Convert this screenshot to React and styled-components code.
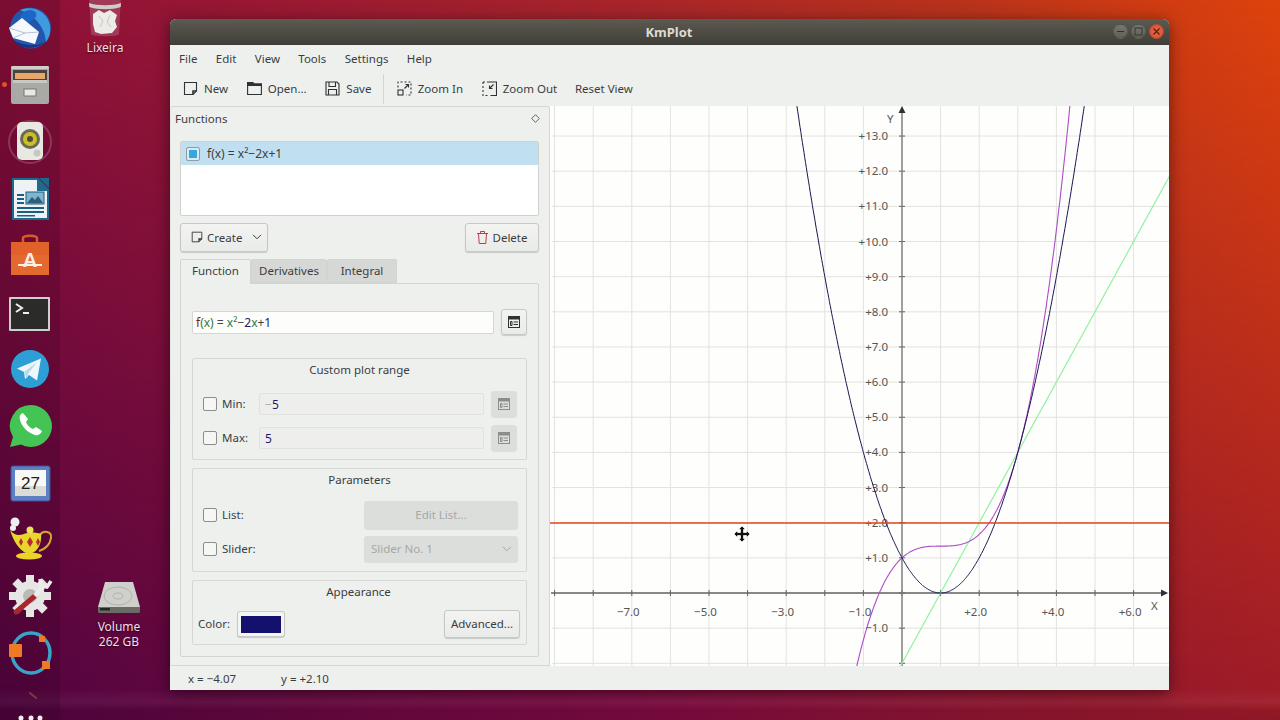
import React from 'react';
import styled, { createGlobalStyle } from 'styled-components';

const GlobalStyle = createGlobalStyle`
  html, body { margin: 0; padding: 0; background: #5a0440; }
  * { box-sizing: border-box; }
  body { font-family: "Noto Sans", "Open Sans", sans-serif; }
`;

const Desktop = styled.div`
  position: relative;
  width: 1280px;
  height: 720px;
  overflow: hidden;
  display: flex;
  background: linear-gradient(to right, #8f1039 0%, #a8262a 50%, #b8331c 75%, #de430c 100%);

  &::before {
    content: "";
    position: absolute;
    inset: 0;
    background: linear-gradient(to right, #50043f 0%, #7c0a42 50%, #8d1432 75%, #9c1a28 100%);
    mask-image: linear-gradient(to bottom, transparent 0%, black 100%);
  }

  &::after {
    content: "";
    position: absolute;
    inset: 0;
    background: linear-gradient(to bottom, transparent 688px, rgba(255, 255, 255, 0.05) 702px, rgba(0, 0, 0, 0.08) 710px);
  }
`;

const Dock = styled.div`
  position: relative;
  z-index: 1;
  width: 60px;
  height: 720px;
  flex: none;
  display: flex;
  flex-direction: column;
  background: rgba(40, 0, 30, 0.18);
`;

const DockSlot = styled.div`
  height: 56.75px;
  flex: none;
  display: flex;
  align-items: center;
  justify-content: center;
  svg { display: block; }
`;

const RunDot = styled.span`
  position: absolute;
  left: 2px;
  top: 82px;
  width: 5px;
  height: 5px;
  border-radius: 50%;
  background: #e0502a;
`;

const DesktopIcon = styled.div`
  position: absolute;
  z-index: 1;
  left: ${p => p.$left}px;
  top: ${p => p.$top}px;
  width: 80px;
  display: flex;
  flex-direction: column;
  align-items: center;
  color: #ecdfe2;
  font-size: 12px;
  line-height: 15px;
  text-align: center;
  text-shadow: 0 1px 2px rgba(0, 0, 0, 0.6);
`;

const IconLabel = styled.span`
  margin-top: ${p => p.$gap}px;
`;

const Window = styled.div`
  position: absolute;
  z-index: 2;
  left: 170px;
  top: 19px;
  width: 999px;
  height: 671px;
  display: flex;
  flex-direction: column;
  background: #eef0ee;
  border-radius: 6px 6px 0 0;
  box-shadow: 0 3px 16px rgba(0, 0, 0, 0.5);
  color: #3a3d3e;
  font-size: 11.5px;
`;

const TitleBar = styled.div`
  position: relative;
  height: 26px;
  flex: none;
  display: flex;
  align-items: center;
  justify-content: center;
  padding-right: 1px;
  border-radius: 6px 6px 0 0;
  background: linear-gradient(to bottom, #5c5a51, #3f3e38);
  color: #dedbd2;
  font-size: 13px;
  font-weight: 700;
`;

const WindowButtons = styled.div`
  position: absolute;
  right: 5px;
  top: 5px;
  display: flex;
  gap: 3px;
`;

const WindowButton = styled.div`
  width: 15px;
  height: 15px;
  border-radius: 50%;
  display: flex;
  align-items: center;
  justify-content: center;
  background: ${p => (p.$close ? 'radial-gradient(circle, #e8674a, #d9502f)' : 'linear-gradient(#78776f, #605f58)')};
  border: 1px solid rgba(0, 0, 0, 0.15);
`;

const MenuBar = styled.div`
  height: 28px;
  flex: none;
  display: flex;
  align-items: center;
  gap: 18.4px;
  padding: 0 0 2px 9px;
  font-size: 11.5px;
`;

const ToolBar = styled.div`
  height: 33px;
  flex: none;
  display: flex;
  align-items: center;
  gap: 18.7px;
  padding-left: 13px;
  padding-bottom: 2px;
`;

const ToolItem = styled.div`
  display: flex;
  align-items: center;
  gap: 6px;
  margin-left: ${p => p.$shift || 0}px;
  svg { display: block; flex: none; }
`;

const ToolSeparator = styled.div`
  width: 1px;
  height: 30px;
  margin: 0 -6px 0 -7px;
  background: #d2d4d2;
`;

const Body = styled.div`
  flex: 1;
  min-height: 0;
  display: flex;
`;

const DockWidget = styled.div`
  width: 380px;
  flex: none;
  display: flex;
  flex-direction: column;
  padding: 0 10px 0 9px;
  border: 1px solid #d6d8d6;
  border-left-color: #e4e6e4;
  border-radius: 3px 3px 0 0;
`;

const DockHeader = styled.div`
  height: 34px;
  flex: none;
  display: flex;
  align-items: center;
  justify-content: space-between;
  margin: 0 -5px 0 -5px;
  padding: 0 0 11px 0;
  svg { margin-right: 0; transform: translateX(-4px); }
`;

const FunctionList = styled.div`
  height: 75px;
  flex: none;
  background: #fff;
  border: 1px solid #cfd1cf;
  border-radius: 2px;
`;

const FunctionRow = styled.div`
  height: 23px;
  display: flex;
  align-items: center;
  gap: 7px;
  padding: 0 0 0 5px;
  background: #c0e0f1;
  border-radius: 1px;
  font-size: 12px;
`;

const ListCheck = styled.span`
  width: 14px;
  height: 14px;
  flex: none;
  padding: 2px;
  border: 1px solid #8d9ca5;
  border-radius: 2px;
  background: #d8ecf6;
  &::before {
    content: "";
    display: block;
    width: 8px;
    height: 8px;
    background: #36a8dc;
  }
`;

const ActionRow = styled.div`
  display: flex;
  justify-content: space-between;
  margin-top: 7px;
`;

const Button = styled.div`
  height: ${p => p.$h || 28}px;
  width: ${p => (p.$w ? `${p.$w}px` : 'auto')};
  flex: none;
  display: flex;
  align-items: center;
  justify-content: center;
  gap: 5px;
  padding-bottom: 1px;
  border: 1px solid ${p => (p.$off ? '#dcdedc' : '#c6c8c6')};
  border-radius: 3px;
  background: ${p => (p.$off ? '#dcdedb' : 'linear-gradient(#f3f4f2, #e9ebe9)')};
  box-shadow: 0 1px 1px rgba(0, 0, 0, ${p => (p.$off ? 0.08 : 0.16)});
  color: ${p => (p.$off ? '#a5a8a6' : 'inherit')};
  svg { display: block; flex: none; }
`;

const CreateButton = styled(Button)`
  justify-content: flex-start;
  padding: 0 5px 1px 10px;
  gap: 4px;
`;

const Caret = styled.span`
  margin-left: auto;
  display: flex;
`;

const RangeButton = styled(Button)`
  margin-left: 7px;
  padding-bottom: 0;
`;

const Tabs = styled.div`
  display: flex;
  margin-top: 7px;
  position: relative;
  z-index: 1;
`;

const Tab = styled.div`
  height: ${p => (p.$active ? 25 : 24)}px;
  width: ${p => p.$w}px;
  display: flex;
  align-items: center;
  justify-content: center;
  padding-bottom: ${p => (p.$active ? 3 : 2)}px;
  background: ${p => (p.$active ? '#eef0ee' : '#d6d8d6')};
  border: 1px solid #d2d4d2;
  border-bottom: ${p => (p.$active ? 'none' : '1px solid #d2d4d2')};
  border-radius: 2px 2px 0 0;
`;

const TabPane = styled.div`
  height: 374px;
  flex: none;
  margin-top: -1px;
  padding: 25px 11px 0;
  border: 1px solid #d2d4d2;
  border-radius: 0 2px 2px 2px;
`;

const InputRow = styled.div`
  display: flex;
  align-items: center;
  justify-content: space-between;
  height: 26px;
  margin-bottom: 23px;
`;

const Field = styled.div`
  width: ${p => p.$w}px;
  height: ${p => p.$h || 22}px;
  display: flex;
  align-items: center;
  padding: 0 0 0 ${p => p.$pad || 3}px;
  background: ${p => (p.$off ? '#eeefed' : '#fdfdfc')};
  border: 1px solid ${p => (p.$off ? '#e0e2e0' : '#d4d6d4')};
  border-radius: 2px;
  font-size: 12px;
`;

const Tok = styled.span`
  color: ${p => p.$c};
`;

const Group = styled.div`
  height: ${p => p.$h}px;
  margin-bottom: 8px;
  padding: 0 ${p => p.$right || 9}px 0 ${p => p.$left || 10}px;
  border: 1px solid #d6d8d6;
  border-radius: 2px;
`;

const GroupTitle = styled.div`
  height: 22px;
  padding-bottom: 2px;
  margin: 0 -9px ${p => p.$gap}px -10px;
  display: flex;
  align-items: center;
  justify-content: center;
`;

const FormRow = styled.div`
  height: 34px;
  display: flex;
  align-items: center;
  justify-content: ${p => (p.$between ? 'space-between' : 'flex-start')};
`;

const CheckLabel = styled.label`
  width: ${p => p.$w}px;
  flex: none;
  display: flex;
  align-items: center;
  gap: 5px;
  line-height: 14px;
`;

const CheckBox = styled.span`
  width: 14px;
  height: 14px;
  flex: none;
  background: #f6f7f5;
  border: 1px solid #8c8e8c;
  border-radius: 2px;
`;

const ColorGroup = styled.div`
  display: flex;
  align-items: center;
  gap: 7px;
`;

const ColorLabel = styled.span`
  padding-bottom: 2px;
`;

const ColorButton = styled(Button)`
  padding: 3px;
  background: #f4f5f3;
  &::before {
    content: "";
    display: block;
    width: 40px;
    height: 17px;
    background: ${p => p.$color};
  }
`;

const ComboButton = styled(Button)`
  justify-content: space-between;
  padding: 0 5px 1px 6px;
`;

const Plot = styled.div`
  flex: 1;
  min-width: 0;
  background: #fefefc;
  svg { display: block; }
`;

const StatusBar = styled.div`
  height: 24px;
  flex: none;
  display: flex;
  align-items: center;
  gap: 45px;
  padding-left: 18px;
`;

const AxisText = styled.text`
  font-family: "Noto Sans", sans-serif;
  font-size: 11.5px;
  fill: #555755;
`;

/* icons */
const stroke = { fill: 'none', stroke: '#2f3234', strokeWidth: 1.1 };

const NewIcon = ({ size = 15 }) => (
  <svg width={size} height={size} viewBox="0 0 15 15" {...stroke}>
    <path d="M1.5 1.5h12v8.5l-3.5 3.5h-8.500z" />
    <path d="M13.500 10h-3.500v3.500" strokeWidth="1.600" />
  </svg>
);

const OpenIcon = () => (
  <svg width="15" height="15" viewBox="0 0 15 15" {...stroke}>
    <path d="M.6 1.500h5l1.500 1.500h7.300v10.500h-13.800z" />
    <path d="M.6 1.500h5l1.500 1.500h7.300v1.500h-13.800z" fill="#2f3234" />
  </svg>
);

const SaveIcon = () => (
  <svg width="15" height="15" viewBox="0 0 15 15" {...stroke}>
    <path d="M1 1h11l2 2v11h-13z" />
    <path d="M4 1v4.500h6.500v-4.500M3.500 14v-5.500h8v5.500" />
  </svg>
);

const ZoomInIcon = () => (
  <svg width="15" height="15" viewBox="0 0 15 15" {...stroke}>
    <rect x="1" y="9" width="5" height="5" />
    <path d="M1 6.500v-5.500h13v13h-5" strokeDasharray="2 2" />
    <path d="M7.500 7.500l4-4M8.500 3.500h3v3" />
  </svg>
);

const ZoomOutIcon = () => (
  <svg width="15" height="15" viewBox="0 0 15 15" {...stroke}>
    <path d="M5 1h9.500v13.500h-6" />
    <path d="M1 1v13.500h6M1 1h4" strokeDasharray="2 2" />
    <path d="M11.500 3.500l-4 4M7.500 4.500v3h3" />
  </svg>
);

const CalcIcon = ({ off }) => (
  <svg width="14" height="14" viewBox="0 0 14 14" fill="none" stroke={off ? '#8b8e8d' : '#2f3234'} strokeWidth="1">
    <rect x="1.500" y="1.500" width="11" height="11" />
    <rect x="1.500" y="1.500" width="11" height="2.500" fill={off ? '#8b8e8d' : '#2f3234'} />
    <path d="M3.500 6.500h1.500v4h-1.500zM6.500 7h4.500M6.500 9.500h4.500" />
  </svg>
);

const TrashSmall = () => (
  <svg width="11" height="13" viewBox="0 0 11 13" fill="none" stroke="#b04050" strokeWidth="1">
    <path d="M0 2.500h11M3.500 2.500v-2h4v2M1.500 2.500l.7 10h6.600l.7-10" />
  </svg>
);

const Chevron = ({ color = '#3a3d3e' }) => (
  <svg width="10" height="6" viewBox="0 0 10 6" fill="none" stroke={color} strokeWidth="1">
    <path d="M1 .8l4 4 4-4" />
  </svg>
);

const FloatIcon = () => (
  <svg width="9" height="9" viewBox="0 0 9 9" fill="none" stroke="#55585a" strokeWidth=".9">
    <path d="M4.500.7l3.800 3.800-3.800 3.800-3.800-3.800z" />
  </svg>
);

const Thunderbird = () => (
  <svg width="48" height="48" viewBox="0 0 48 48">
    <circle cx="24.500" cy="24" r="20.500" fill="#2256ad" />
    <path d="M14 6c12-5 27 1 30 15 1 8-1 13-4 17-1-13-9-26-26-32z" fill="#3f9be0" />
    <path d="M14 16c0-6 4-10 11-10 5 1 6 4 5 7l-8 6z" fill="#1d66c4" />
    <path d="M7 36c10 6 22 7 32 2-8 7-24 9-32-2z" fill="#16337f" />
    <path d="M3 24l13-10 17 14-4 12-22-6z" fill="#f7f8fb" />
    <path d="M3 24l16 5 14-1M7 34l12-5" fill="none" stroke="#b9c2d4" strokeWidth="1" />
  </svg>
);

const Files = () => (
  <svg width="48" height="48" viewBox="0 0 48 48">
    <rect x="5" y="5" width="38" height="38" rx="2" fill="#a9aaa6" />
    <rect x="5" y="5" width="38" height="3" rx="1.500" fill="#cfcfcb" />
    <rect x="7" y="9" width="34" height="13" fill="#4a443c" />
    <rect x="9" y="12" width="30" height="6" fill="#e6a66c" />
    <rect x="7" y="19" width="34" height="3" fill="#c8c8c4" />
    <rect x="18" y="28" width="12" height="7" fill="#e8e8e5" stroke="#777" strokeWidth="1" />
  </svg>
);

const Speaker = () => (
  <svg width="48" height="48" viewBox="0 0 48 48">
    <circle cx="24" cy="24" r="21" fill="none" stroke="#fff" strokeOpacity=".18" strokeWidth="2" />
    <rect x="11" y="4" width="26" height="38" rx="5" fill="#e8e9e2" />
    <circle cx="24" cy="21" r="10" fill="#6a6a55" />
    <circle cx="24" cy="21" r="7" fill="#cdbd2a" />
    <circle cx="24" cy="21" r="3" fill="#4f4d30" />
    <circle cx="31" cy="35" r="3.500" fill="#c6c8c2" />
  </svg>
);

const Writer = () => (
  <svg width="48" height="48" viewBox="0 0 48 48">
    <path d="M6 3h26l11 11v31h-37z" fill="#1d6a8f" />
    <path d="M8 5h23v11h10v27h-33z" fill="#eef2f4" />
    <path d="M33 3l10 0v10z" fill="#1d6a8f" />
    <rect x="11" y="19" width="7" height="2" fill="#1b5e80" />
    <rect x="11" y="23" width="7" height="2" fill="#1b5e80" />
    <rect x="11" y="27" width="7" height="2" fill="#1b5e80" />
    <rect x="20" y="17" width="18" height="12" fill="#7fb4cd" stroke="#1b5e80" />
    <path d="M21 28l5-6 3 3 3-4 5 7z" fill="#2c5f78" />
    <rect x="11" y="32" width="27" height="2" fill="#1b5e80" />
    <rect x="11" y="36" width="27" height="2" fill="#1b5e80" />
    <rect x="11" y="40" width="18" height="1.500" fill="#1b5e80" />
  </svg>
);

const BagLetter = styled.text`
  font-family: "Liberation Sans", sans-serif;
  font-weight: 700;
  font-size: 20px;
  fill: #fbeee6;
`;

const Bag = () => (
  <svg width="48" height="48" viewBox="0 0 48 48">
    <path d="M17 12v-5c0-3 14-3 14 0v5" fill="none" stroke="#d85b25" strokeWidth="2.500" />
    <rect x="5" y="11" width="38" height="33" fill="#e4692f" />
    <rect x="5" y="11" width="38" height="13" fill="#db5a25" opacity=".5" />
    <BagLetter x="24" y="36" textAnchor="middle">A</BagLetter>
    <rect x="12" y="33" width="24" height="2" fill="#fbeee6" />
  </svg>
);

const Terminal = () => (
  <svg width="48" height="48" viewBox="0 0 48 48">
    <rect x="3" y="9" width="41" height="34" rx="1" fill="#cfcfcd" />
    <rect x="5" y="11" width="37" height="30" fill="#2b2c29" />
    <path d="M10 16l6 4-6 4" fill="none" stroke="#eee" strokeWidth="2" />
    <path d="M17 25h6" stroke="#eee" strokeWidth="2" />
  </svg>
);

const Telegram = () => (
  <svg width="48" height="48" viewBox="0 0 48 48">
    <circle cx="24" cy="24" r="19" fill="#2e9fd6" />
    <path d="M11 23.500l24-10-4 22-8-5.500-4 4-1-7z" fill="#eef7fb" />
    <path d="M18 27l13-10-9 12-1 5z" fill="#bcd9e6" />
  </svg>
);

const WhatsApp = () => (
  <svg width="48" height="48" viewBox="0 0 48 48">
    <path d="M25 3a21 21 0 1 1-10 39.500l-11 2.500 3-10a21 21 0 0 1 18-32z" fill="#44c455" />
    <path d="M17 11c-3 1-4 4-3 7 2 7 8 13 15 15 3 1 6-1 7-4l-6-4-3 2c-3-1-6-4-7-7l2-3z" fill="#fff" />
  </svg>
);

const CalendarText = styled.text`
  font-family: "Liberation Sans", sans-serif;
  font-size: 17px;
  fill: #222;
`;

const Calendar = () => (
  <svg width="48" height="48" viewBox="0 0 48 48">
    <rect x="5" y="8" width="39" height="35" rx="2" fill="#5d7fc4" stroke="#3d5596" />
    <rect x="9" y="12" width="31" height="26" fill="#f8f8f4" />
    <rect x="9" y="28" width="31" height="10" fill="#dcdcd6" />
    <CalendarText x="24.500" y="31" textAnchor="middle">27</CalendarText>
  </svg>
);

const Lamp = () => (
  <svg width="48" height="48" viewBox="0 0 48 48">
    <circle cx="9" cy="7" r="4.500" fill="#f0edf0" />
    <circle cx="7" cy="13" r="3" fill="#f0edf0" />
    <path d="M34 20c3-5 12-4 11 3-1 7-6 11-12 13" fill="none" stroke="#d4a62a" strokeWidth="2" />
    <path d="M4 15c4 5 8 6 14 4 5-2 12-2 17 0 1 9-3 17-9 19h-6c-7-3-13-13-16-23z" fill="#e9d62c" />
    <ellipse cx="23" cy="41" rx="13" ry="3.500" fill="#ecd32a" />
    <circle cx="24" cy="15" r="3.500" fill="#efe05a" />
    <path d="M24 22l3 5-3 5-3-5zM15 23l2 4-2 4-2-4zM32 23l2 4-2 4-2-4z" fill="#b82b36" />
  </svg>
);

const Tools = () => (
  <svg width="48" height="48" viewBox="0 0 48 48">
    <g fill="#e6e6e4">
      <circle cx="24" cy="24" r="15" />
      {[0, 45, 90, 135, 180, 225, 270, 315].map(a => (
        <rect key={a} x="20" y="3" width="8" height="8" transform={`rotate(${a} 24 24)`} />
      ))}
    </g>
    <circle cx="24" cy="24" r="7" fill="#b9b9b6" />
    <path d="M10 40l20-17" stroke="#a8262c" strokeWidth="5" strokeLinecap="round" />
    <path d="M29 24l8-9" stroke="#ececea" strokeWidth="5" />
    <path d="M34 7l1 7 6 1 4-6" fill="none" stroke="#ececea" strokeWidth="3.500" />
  </svg>
);

const Ring = () => (
  <svg width="48" height="48" viewBox="0 0 48 48">
    <ellipse cx="25" cy="24" rx="19" ry="20" fill="none" stroke="#3aa4c6" strokeWidth="3.500" />
    <rect x="3" y="15" width="13" height="13" rx="1" fill="#ef7a26" />
    <rect x="33" y="7" width="6" height="6" fill="#ef7a26" />
    <rect x="36" y="32" width="8" height="8" fill="#ef7a26" />
  </svg>
);

const AppsDots = () => (
  <svg width="48" height="48" viewBox="0 0 48 48">
    <path d="M24 8l6 5" stroke="#9a4a3e" strokeWidth="2" opacity=".7" strokeLinecap="round" />
    <circle cx="15" cy="33" r="2.500" fill="#f4eef0" />
    <circle cx="25" cy="33" r="2.500" fill="#f4eef0" />
    <circle cx="34" cy="33" r="2.500" fill="#f4eef0" />
  </svg>
);

const TrashBin = () => (
  <svg width="36" height="38" viewBox="0 0 36 38">
    <path d="M2 -6h32l-2 40c0 3-28 3-28 0z" fill="#a84a68" opacity=".7" />
    <path d="M2 3c8 3 24 3 32 0l-.3 4c-8 3-23 3-31.400 0z" fill="#cdcdca" />
    <path d="M6 14l6-4 5 3 6-3 7 5-2 6 2 6-5 6-11 1-6-2-2-8z" fill="#ecebe8" />
    <path d="M12 16l4 5-3 6M23 15l-3 7 4 5" fill="none" stroke="#c8c6c4" />
  </svg>
);

const HardDisk = () => (
  <svg width="44" height="34" viewBox="0 0 44 34">
    <path d="M8 1h28l7 25h-42z" fill="#cfd0cb" />
    <ellipse cx="21" cy="15" rx="14" ry="9" fill="none" stroke="#b1b2ac" />
    <ellipse cx="21" cy="15" rx="5" ry="3" fill="none" stroke="#b1b2ac" />
    <path d="M1 26h42v4c0 2-1 2-2 2h-38c-1 0-2 0-2-2z" fill="#6a6b67" />
    <rect x="3" y="27" width="10" height="2.500" fill="#262624" />
  </svg>
);

const dockIcons = [Thunderbird, Files, Speaker, Writer, Bag, Terminal, Telegram, WhatsApp, Calendar, Lamp, Tools, Ring, AppsDots];

/* plot: x unit 38.6px, y unit 35.15px, origin at 352,487 inside the 619x560 canvas */
const ox = 352;
const oy = 487;
const ux = 38.6;
const uy = 35.15;
const px = x => ox + x * ux;
const py = y => oy - y * uy;

const curve = (fn, from = -5, to = 5) => {
  const pts = [];
  for (let x = from; x <= to; x += 0.02) {
    pts.push(`${px(x).toFixed(1)},${py(fn(x)).toFixed(1)}`);
  }
  return pts.join(' ');
};

const range = (a, b) => Array.from({ length: b - a + 1 }, (_, i) => a + i);

const Chart = () => (
  <svg width="619" height="560" viewBox="0 0 619 560">
    <g stroke="#e2e3e0" strokeWidth="1">
      {range(-9, 6).map(k => <line key={k} x1={px(k)} x2={px(k)} y1="0" y2="560" />)}
      {range(-2, 13).map(k => <line key={k} x1="2" x2="619" y1={py(k)} y2={py(k)} />)}
    </g>
    <g stroke="#5d5f5d" strokeWidth="1">
      {range(-9, 6).map(k => <line key={k} x1={px(k)} x2={px(k)} y1={oy - 3} y2={oy + 3} />)}
      {range(-2, 13).map(k => <line key={k} x1={ox - 3} x2={ox + 3} y1={py(k)} y2={py(k)} />)}
    </g>
    <line x1="1" x2="614" y1={oy} y2={oy} stroke="#646664" strokeWidth="1.400" />
    <line x1={ox} x2={ox} y1="6" y2="560" stroke="#7c7e7c" strokeWidth="1.400" />
    <path d={`M618 ${oy}l-7-3.500v7z`} fill="#2f3130" />
    <path d={`M${ox} 0l-3.500 7h7z`} fill="#2f3130" />
    {[-7, -5, -3, -1, 2, 4, 6].map(k => (
      <AxisText key={k} x={px(k) - 3.5} y={oy + 23} textAnchor="middle">
        {k < 0 ? `\u2212${-k}.0` : `+${k}.0`}
      </AxisText>
    ))}
    {[...range(1, 13), -1].map(k => (
      <AxisText key={k} x={ox - 14} y={py(k) + 4} textAnchor="end">
        {k < 0 ? `\u2212${-k}.0` : `+${k}.0`}
      </AxisText>
    ))}
    <AxisText x="337" y="17">Y</AxisText>
    <AxisText x="601" y="504">X</AxisText>
    <polyline points={curve(x => 2 * x - 2, -1, 8)} fill="none" stroke="#90f2a0" strokeWidth="1.200" />
    <polyline points={curve(x => (x * x * x) / 3 - x * x + x + 1)} fill="none" stroke="#b04cc8" strokeWidth="1.100" />
    <polyline points={curve(x => (x - 1) * (x - 1))} fill="none" stroke="#1a1650" strokeWidth="1" />
    <line x1="0" x2="619" y1="417" y2="417" stroke="#e2471a" strokeWidth="1.500" />
    <path
      d="M192 420l3.500 3.500h-2v3h3v-2l3.500 3.500-3.500 3.500v-2h-3v3h2l-3.500 3.500-3.500-3.500h2v-3h-3v2l-3.500-3.500 3.500-3.500v2h3v-3h-2z"
      fill="#111"
      stroke="#fff"
      strokeWidth=".7"
    />
  </svg>
);

const App = () => {
  const menus = ['File', 'Edit', 'View', 'Tools', 'Settings', 'Help'];
  return (
    <Desktop>
      <GlobalStyle />
      <Dock>
        <RunDot />
        {dockIcons.map((Icon, i) => (
          <DockSlot key={i}><Icon /></DockSlot>
        ))}
      </Dock>

      <DesktopIcon $left={65} $top={0}>
        <TrashBin />
        <IconLabel $gap={2}>Lixeira</IconLabel>
      </DesktopIcon>
      <DesktopIcon $left={79} $top={581}>
        <HardDisk />
        <IconLabel $gap={4}>Volume<br />262 GB</IconLabel>
      </DesktopIcon>

      <Window>
        <TitleBar>
          KmPlot
          <WindowButtons>
            <WindowButton>
              <svg width="9" height="9" viewBox="0 0 9 9"><path d="M1 4.500h7" stroke="#33322e" strokeWidth="1" /></svg>
            </WindowButton>
            <WindowButton>
              <svg width="9" height="9" viewBox="0 0 9 9"><rect x="1" y="1" width="7" height="7" fill="none" stroke="#33322e" /></svg>
            </WindowButton>
            <WindowButton $close>
              <svg width="9" height="9" viewBox="0 0 9 9"><path d="M1.500 1.500l6 6M7.500 1.500l-6 6" stroke="#4a2015" strokeWidth="1.100" /></svg>
            </WindowButton>
          </WindowButtons>
        </TitleBar>

        <MenuBar>
          {menus.map(m => <span key={m}>{m}</span>)}
        </MenuBar>

        <ToolBar>
          <ToolItem><NewIcon />New</ToolItem>
          <ToolItem><OpenIcon />Open...</ToolItem>
          <ToolItem><SaveIcon />Save</ToolItem>
          <ToolSeparator />
          <ToolItem><ZoomInIcon />Zoom In</ToolItem>
          <ToolItem><ZoomOutIcon />Zoom Out</ToolItem>
          <ToolItem $shift={-1}>Reset View</ToolItem>
        </ToolBar>

        <Body>
          <DockWidget>
            <DockHeader>
              Functions
              <FloatIcon />
            </DockHeader>
            <FunctionList>
              <FunctionRow>
                <ListCheck />
                <span>f(x) = x²−2x+1</span>
              </FunctionRow>
            </FunctionList>

            <ActionRow>
              <CreateButton $w={88} $h={29}>
                <NewIcon size={12} />
                Create
                <Caret><Chevron /></Caret>
              </CreateButton>
              <Button $w={74} $h={29}>
                <TrashSmall />
                Delete
              </Button>
            </ActionRow>

            <Tabs>
              <Tab $active $w={71}>Function</Tab>
              <Tab $w={76}>Derivatives</Tab>
              <Tab $w={70}>Integral</Tab>
            </Tabs>

            <TabPane>
              <InputRow>
                <Field $w={302} $h={23}>
                  <Tok $c="#7a1f1f">f</Tok>
                  <Tok $c="#2f7a3a">(x)</Tok>
                  <Tok $c="#444">&nbsp;=&nbsp;</Tok>
                  <Tok $c="#2f7a3a">x²</Tok>
                  <Tok $c="#444">−</Tok>
                  <Tok $c="#1b1a72">2</Tok>
                  <Tok $c="#2f7a3a">x</Tok>
                  <Tok $c="#444">+</Tok>
                  <Tok $c="#1b1a72">1</Tok>
                </Field>
                <Button $w={26} $h={26}><CalcIcon /></Button>
              </InputRow>

              <Group $h={102}>
                <GroupTitle $gap={6}>Custom plot range</GroupTitle>
                <FormRow>
                  <CheckLabel $w={56}><CheckBox />Min:</CheckLabel>
                  <Field $w={225} $off $pad={5}>
                    <Tok $c="#a9abab">−</Tok><Tok $c="#1b1a72">5</Tok>
                  </Field>
                  <RangeButton $w={26} $h={26} $off><CalcIcon off /></RangeButton>
                </FormRow>
                <FormRow>
                  <CheckLabel $w={56}><CheckBox />Max:</CheckLabel>
                  <Field $w={225} $off $pad={5}>
                    <Tok $c="#1b1a72">5</Tok>
                  </Field>
                  <RangeButton $w={26} $h={26} $off><CalcIcon off /></RangeButton>
                </FormRow>
              </Group>

              <Group $h={104}>
                <GroupTitle $gap={7}>Parameters</GroupTitle>
                <FormRow>
                  <CheckLabel $w={161}><CheckBox />List:</CheckLabel>
                  <Button $w={154} $off>Edit List...</Button>
                </FormRow>
                <FormRow>
                  <CheckLabel $w={161}><CheckBox />Slider:</CheckLabel>
                  <ComboButton $w={154} $h={26} $off>
                    Slider No. 1
                    <Chevron color="#a5a8a6" />
                  </ComboButton>
                </FormRow>
              </Group>

              <Group $h={65} $left={5} $right={6}>
                <GroupTitle $gap={4}>Appearance</GroupTitle>
                <FormRow $between>
                  <ColorGroup>
                    <ColorLabel>Color:</ColorLabel>
                    <ColorButton $w={48} $h={26} $color="#14106e" />
                  </ColorGroup>
                  <Button $w={76}>Advanced...</Button>
                </FormRow>
              </Group>
            </TabPane>
          </DockWidget>

          <Plot><Chart /></Plot>
        </Body>

        <StatusBar>
          <span>x = −4.07</span>
          <span>y = +2.10</span>
        </StatusBar>
      </Window>
    </Desktop>
  );
};

export default App;
